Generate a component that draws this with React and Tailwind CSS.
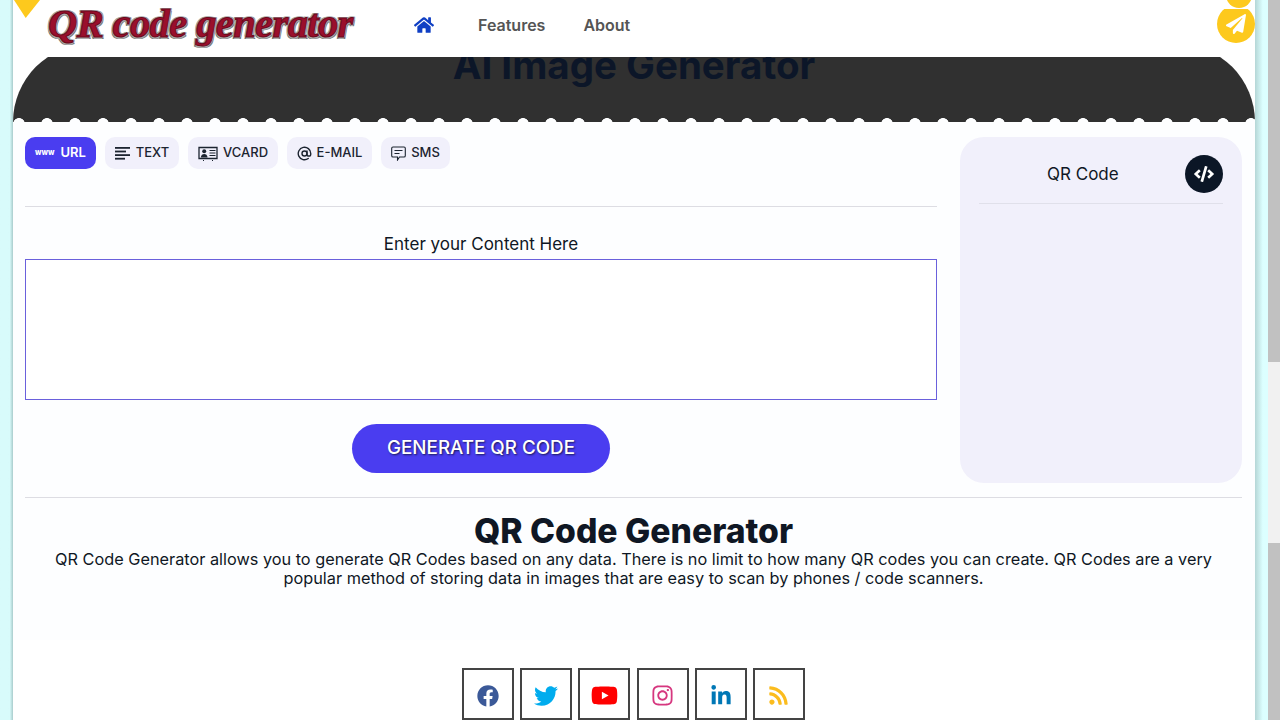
import React from "react";
import { FaHome, FaPaperPlane, FaFacebook, FaTwitter, FaYoutube, FaInstagram, FaLinkedinIn, FaRss, FaCode } from "react-icons/fa";
import { AtSign } from "lucide-react";

// the lines icon has four thick bars in the reference
const TextIcon = () => (
  <svg width="16" height="14" viewBox="0 0 16 14" fill="currentColor">
    <rect x="0" y="1" width="15" height="1.8" />
    <rect x="0" y="4.6" width="11" height="1.8" />
    <rect x="0" y="8.2" width="15" height="1.8" />
    <rect x="0" y="11.8" width="10" height="1.8" />
  </svg>
);

const CardIcon = () => (
  <svg width="20" height="16" viewBox="0 0 20 16" fill="none" stroke="currentColor">
    <path d="M1 2.5h18v11H1z" strokeWidth="1.3" />
    <circle cx="6.2" cy="6.3" r="2" fill="currentColor" stroke="none" />
    <path d="M2.8 12.5c.3-2.6 1.7-3.6 3.4-3.6s3.1 1 3.4 3.6z" fill="currentColor" stroke="none" />
    <path d="M11.5 5.5h6M11.5 8h6M11.5 10.5h6" strokeWidth="1.2" />
    <path d="M5 15.5h1M14 15.5h1" strokeWidth="1" />
  </svg>
);

const SmsIcon = () => (
  <svg width="15" height="15" viewBox="0 0 15 15" fill="none" stroke="currentColor" strokeWidth="1.1">
    <path d="M2 1h11a1.300 1.300 0 0 1 1.300 1.300v7.400a1.300 1.300 0 0 1-1.300 1.300H8.500l-2 3v-3H2a1.300 1.300 0 0 1-1.300-1.300V2.300A1.300 1.300 0 0 1 2 1z" />
    <path d="M3.500 4.500h8M3.500 7.500h5" />
  </svg>
);

const tabs = [
  { label: "TEXT", icon: <TextIcon />, w: "w-[74px]" },
  { label: "VCARD", icon: <CardIcon />, w: "w-[90px]" },
  { label: "E-MAIL", icon: <AtSign size={15} strokeWidth={2.2} />, w: "w-[85px]" },
  { label: "SMS", icon: <SmsIcon />, w: "w-[69px]" },
];

const socials = [
  { icon: <FaFacebook size={22} className="text-[#3b5998]" /> },
  { icon: <FaTwitter size={24} className="text-[#00acee]" /> },
  { icon: <FaYoutube size={27} className="text-[#ff0000]" /> },
  { icon: <FaInstagram size={23} className="text-[#d6377f]" /> },
  { icon: <FaLinkedinIn size={22} className="text-[#0077b5]" /> },
  { icon: <FaRss size={21} className="text-[#fbbc1e]" /> },
];

const App = () => {
  return (
    <div className="flex h-screen w-full overflow-hidden bg-white font-['Inter',sans-serif] text-[#0f1724]">
      <div className="h-full w-[13px] shrink-0 bg-gradient-to-r from-[#d8fbfb] from-75% to-[#a9cccc]" />

      <div className="relative flex h-full w-[1242px] shrink-0 flex-col">
        {/* yellow bits sticking in from the page above */}
        <div className="absolute left-[1px] top-0 z-20 h-[18px] w-[26px] bg-[#fdc91d] [clip-path:polygon(0_0,100%_0,45%_100%)]" />
        <div className="absolute right-[3px] top-[-18px] z-20 h-[26px] w-[26px] rounded-full bg-[#fdc91d]" />
        <div className="absolute right-0 top-[5px] z-20 flex h-[38px] w-[38px] items-center justify-center rounded-full bg-[#fdc91d] text-white [clip-path:inset(4px_0_0_0)]">
          <FaPaperPlane size={20} />
        </div>

        <header className="relative z-10 flex h-[57px] shrink-0 items-center bg-white pl-[35px]">
          <div className="w-[307px] whitespace-nowrap pb-[8px] font-['Liberation_Serif',serif] text-[40.500px] font-bold italic leading-none tracking-[-0.6px] text-[#9a0f2c] [-webkit-text-stroke:1px_#6b0a1c] [text-shadow:1.500px_0_#aaa,-1.500px_0_#aaa,0_1.500px_#aaa,0_-1.500px_#aaa,1.500px_1.500px_#777,-1.500px_-1.500px_#999,1.500px_-1.500px_#999,-1.500px_1.500px_#777]">
            QR code generator
          </div>
          <nav className="mb-[8px] ml-[59px] flex items-center font-['Inter',sans-serif] text-[16px] font-semibold text-[#555]">
            <FaHome size={20} className="text-[#0f3fc4]" />
            <span className="ml-[44px]">Features</span>
            <span className="ml-[38px]">About</span>
          </nav>
        </header>

        {/* the panel's top sits behind the header, only the lower part of the arc shows */}
        <div className="mt-[-13px] flex h-[78px] shrink-0 justify-center overflow-hidden rounded-t-[81px] bg-[#303030]">
          <h1 className="mt-[-1px] text-[38.500px] font-bold leading-[44px] text-[#0c1628]">AI Image Generator</h1>
        </div>
        <div className="mt-[-6px] h-[6px] shrink-0 bg-[radial-gradient(circle_at_6px_8px,#fdfeff_5.600px,transparent_6.200px)] bg-[length:28px_6px]" />

        <main className="flex h-[518px] shrink-0 flex-col bg-[#fdfeff] pl-[12px] pr-[13px] pt-[15px]">
          <div className="flex gap-[23px]">
            <section className="flex w-[912px] shrink-0 flex-col">
              <div className="flex gap-[9px]">
                <button className="flex h-[32px] w-[71px] items-center justify-center gap-[6px] rounded-[10px] bg-[#4a3df0] text-[13px] font-semibold text-white">
                  <span className="text-[7.500px] font-extrabold leading-none">www</span>
                  URL
                </button>
                {tabs.map((t) => (
                  <button key={t.label} className={`flex h-[32px] ${t.w} items-center justify-center gap-[5px] rounded-[10px] bg-[#f1f0fb] text-[13px] font-medium text-[#1c2430]`}>
                    {t.icon}
                    {t.label}
                  </button>
                ))}
              </div>
              <hr className="mt-[37px] border-[#dddde3]" />
              <label className="mt-[26px] block text-center text-[17px] leading-[22px]">Enter your Content Here</label>
              <div className="mt-[4px] h-[141px] border border-[#6a60dc] bg-white" />
              <button className="mx-auto mt-[24px] h-[49px] w-[258px] rounded-full bg-[#4a3df0] text-[18.800px] font-medium text-white [text-shadow:1px_1px_2px_#1a1a55]">
                GENERATE QR CODE
              </button>
            </section>

            <aside className="flex h-[346px] w-[282px] shrink-0 flex-col rounded-[24px] bg-[#f1f0fb] px-[19px] pt-[18px]">
              <div className="flex h-[49px] items-start justify-between border-b border-[#e0e0ea]">
                <span className="ml-[68px] mt-[8px] text-[17px] leading-[22px]">QR Code</span>
                <span className="flex h-[38px] w-[38px] items-center justify-center rounded-full bg-[#0b1626] text-white">
                  <FaCode size={20} />
                </span>
              </div>
            </aside>
          </div>

          <hr className="mt-[14px] border-[#dddde3]" />
          <h2 className="mt-[14px] text-center text-[33.700px] font-extrabold leading-[38px] text-[#0f1724]">QR Code Generator</h2>
          <p className="mx-auto w-[1170px] text-center text-[16.300px] leading-[19px]">
            QR Code Generator allows you to generate QR Codes based on any data. There is no limit to how many QR codes you can create. QR Codes are a very popular method of storing data in images that are easy to scan by phones / code scanners.
          </p>
        </main>

        <footer className="flex flex-1 justify-center gap-[6.200px] bg-white pr-[1px] pt-[28px]">
          {socials.map((s, i) => (
            <a key={i} className="flex h-[52px] w-[52px] shrink-0 items-center justify-center border-2 border-[#444] pt-[3px]">
              {s.icon}
            </a>
          ))}
        </footer>
      </div>

      <div className="h-full w-[13px] shrink-0 bg-gradient-to-r from-[#b5d6d6] to-[#dcffff] to-60%" />

      <div className="flex h-full w-[12px] shrink-0 flex-col bg-[#c1c1c1]">
        <div className="h-[362px]" />
        <div className="h-[181px] bg-[#f1f1f1]" />
      </div>
    </div>
  );
};

export default App;
